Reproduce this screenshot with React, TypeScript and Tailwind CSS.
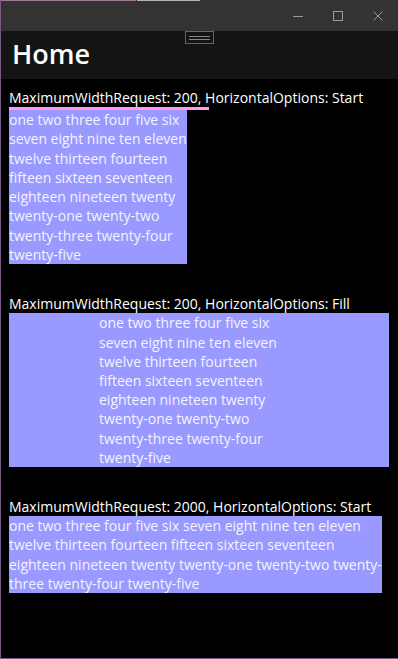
import React from "react";

const words =
  "one two three four five six seven eight nine ten eleven twelve thirteen fourteen fifteen sixteen seventeen eighteen nineteen twenty twenty-one twenty-two twenty-three twenty-four twenty-five";

const TitleBar = () => (
  <div className="relative flex items-center justify-end h-[31px] bg-[#333333]">
    <div className="absolute left-0 top-0 h-px w-[135px] bg-[#a07896]" />
    <div className="absolute left-[136px] top-0 h-px w-[63px] bg-[#b5b5b5]" />
    <div className="flex items-center h-full">
      <div className="w-10 h-full flex items-center justify-center">
        <svg width="10" height="10" viewBox="0 0 10 10">
          <path d="M0 5.5h10" stroke="#9a9a9a" strokeWidth="1" />
        </svg>
      </div>
      <div className="w-10 h-full flex items-center justify-center">
        <svg width="10" height="10" viewBox="0 0 10 10">
          <rect x="0.5" y="0.5" width="9" height="9" fill="none" stroke="#9a9a9a" strokeWidth="1" />
        </svg>
      </div>
      <div className="w-10 h-full flex items-center justify-center">
        <svg width="10" height="10" viewBox="0 0 10 10">
          <path d="M0.5 0.5l9 9M9.5 0.5l-9 9" stroke="#9a9a9a" strokeWidth="1" />
        </svg>
      </div>
    </div>
  </div>
);

const Section = ({ label, children, underline }: { label: string; children: React.ReactNode; underline?: boolean }) => (
  <div className="flex flex-col">
    <p className="text-[14px] leading-[19px] text-white">{label}</p>
    {underline && <div className="h-[3px] w-[200px] bg-[#ff99ee]" />}
    {children}
  </div>
);

const App = () => {
  return (
    <div
      className="w-[398px] h-[659px] bg-black flex flex-col overflow-hidden border-l border-b border-[#7a5a82]"
      style={{ fontFamily: '"Open Sans", "Noto Sans", sans-serif' }}
    >
      <TitleBar />
      <div className="relative h-[48px] bg-[#141414] flex items-center px-[11px]">
        <h1 className="text-[27px] font-semibold text-white leading-none pb-[4px]">Home</h1>
        <div className="absolute left-[184px] top-0 w-[29px] h-[13px] border border-[#666666] flex flex-col items-center justify-center gap-[2px]">
          <div className="w-[21px] h-px bg-[#888888]" />
          <div className="w-[21px] h-px bg-[#888888]" />
        </div>
      </div>
      <div className="flex flex-col gap-[30px] pl-[8px] pt-[9px] text-[#f2f2ff]">
        <Section label="MaximumWidthRequest: 200, HorizontalOptions: Start" underline>
          <div className="w-[178px] bg-[#9999ff]">
            <p className="text-[14px] leading-[19.3px] text-[#f4f4ff] max-w-[178px]">{words}</p>
          </div>
        </Section>
        <Section label="MaximumWidthRequest: 200, HorizontalOptions: Fill">
          <div className="w-[380px] bg-[#9999ff] flex justify-center">
            <p className="text-[14px] leading-[19.2px] text-[#f4f4ff] w-[200px]">{words}</p>
          </div>
        </Section>
        <Section label="MaximumWidthRequest: 2000, HorizontalOptions: Start">
          <div className="w-[373px] bg-[#9999ff]">
            <p className="text-[14px] leading-[19.3px] text-[#f4f4ff]">{words}</p>
          </div>
        </Section>
      </div>
    </div>
  );
};

export default App;
